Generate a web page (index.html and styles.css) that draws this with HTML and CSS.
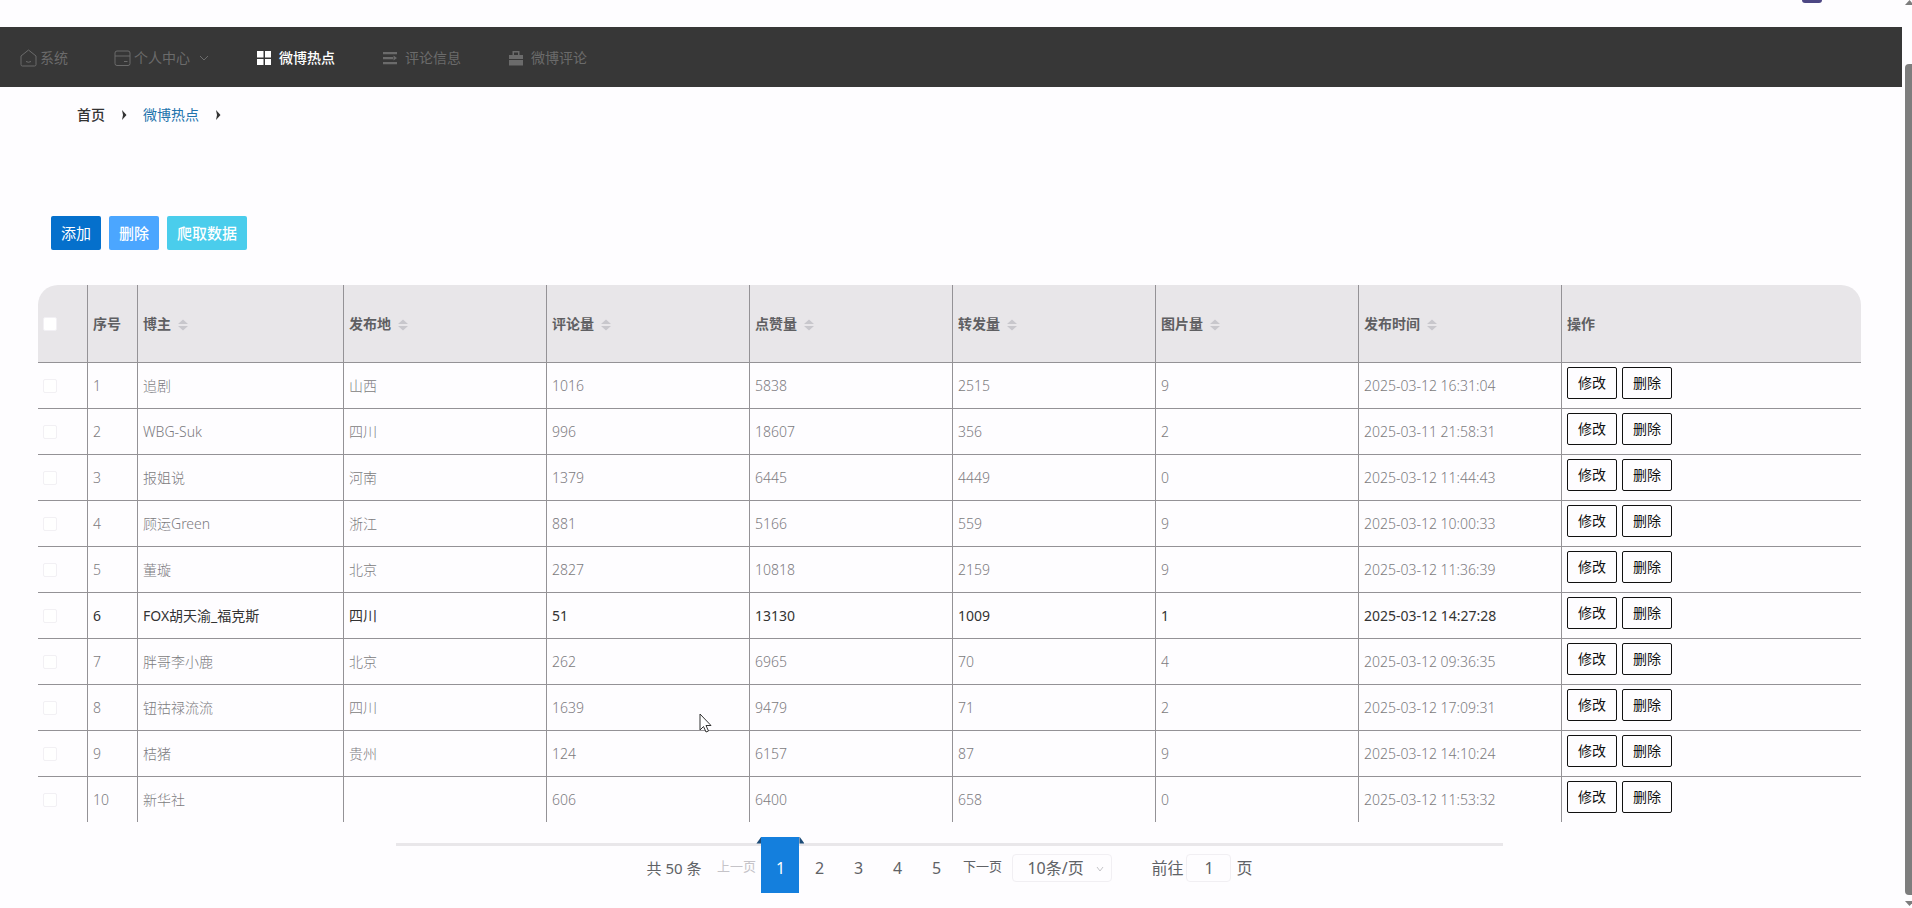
FILE: index.html
```html
<!DOCTYPE html>
<html lang="zh-CN">
<head>
<meta charset="utf-8">
<title>微博热点</title>
<link rel="stylesheet" href="styles.css">
</head>
<body>
<svg class="sprite" aria-hidden="true">
  <symbol id="sort" viewBox="0 0 10 12"><path d="M5 0.5 10 5H0zM0 7h10L5 11.5z" fill="currentColor"/></symbol>
</svg>
<div class="page">
  <header class="topbar"><span class="avatar"></span></header>
  <nav class="nav">
    <a class="nav-item" href="#"><svg class="icon-line" viewBox="0 0 17 18"><path d="M8.500 1 1 7v8.500q0 1.500 1.500 1.500h12q1.500 0 1.500-1.500V7zM6 12.500q2.500 1.500 5 0"/></svg>系统</a>
    <a class="nav-item" href="#"><svg class="icon-line" viewBox="0 0 17 18"><rect x="1" y="2" width="15" height="14.500" rx="2"/><path d="M1 7h15M10 12.500h3.500"/></svg>个人中心<svg class="icon-chevron" viewBox="0 0 10 6"><path d="M1 1l4 4 4-4"/></svg></a>
    <a class="nav-item active" href="#"><svg class="icon-fill" viewBox="0 0 18 18"><path d="M2 2h6.500v6.500H2zM10 2h6v6.500h-6zM2 10h6.500v6H2zM10 10h6v6h-6z"/></svg>微博热点</a>
    <a class="nav-item" href="#"><svg class="icon-fill" viewBox="0 0 18 18"><path d="M2 3h14v2.200H2zM2 8h10v2.200H2zM2 13h14v2.200H2zM12.500 6.500 16 9l-3.500 2.500z"/></svg>评论信息</a>
    <a class="nav-item" href="#"><svg class="icon-fill" viewBox="0 0 18 18"><path d="M5.500 6V2h7v4H16v4H2V6zM7 3.500V6h4V3.500zM2 11h14v5.500H2z" fill-rule="evenodd"/></svg>微博评论</a>
  </nav>
  <main class="content">
    <div class="crumbs">
      <a class="crumb" href="#">首页</a>
      <svg class="crumb-arrow" viewBox="0 0 6 10"><path d="M1 0 5.500 5 1 10 2 5z"/></svg>
      <a class="crumb current" href="#">微博热点</a>
      <svg class="crumb-arrow" viewBox="0 0 6 10"><path d="M1 0 5.500 5 1 10 2 5z"/></svg>
    </div>
    <div class="tools">
      <button class="tool add">添加</button>
      <button class="tool del">删除</button>
      <button class="tool crawl">爬取数据</button>
    </div>
    <table class="grid">
      <colgroup><col class="c-small"><col class="c-small"><col class="c-name"><col><col><col><col><col><col><col class="c-ops"></colgroup>
      <thead>
        <tr>
          <th><input type="checkbox" class="check" aria-label="全选"></th>
          <th>序号</th>
          <th>博主<button class="sort" aria-label="排序"><svg><use href="#sort"/></svg></button></th>
          <th>发布地<button class="sort" aria-label="排序"><svg><use href="#sort"/></svg></button></th>
          <th>评论量<button class="sort" aria-label="排序"><svg><use href="#sort"/></svg></button></th>
          <th>点赞量<button class="sort" aria-label="排序"><svg><use href="#sort"/></svg></button></th>
          <th>转发量<button class="sort" aria-label="排序"><svg><use href="#sort"/></svg></button></th>
          <th>图片量<button class="sort" aria-label="排序"><svg><use href="#sort"/></svg></button></th>
          <th>发布时间<button class="sort" aria-label="排序"><svg><use href="#sort"/></svg></button></th>
          <th>操作</th>
        </tr>
      </thead>
      <tbody>
        <tr><td><input type="checkbox" class="check" aria-label="选择第1行"></td><td>1</td><td>追剧</td><td>山西</td><td>1016</td><td>5838</td><td>2515</td><td>9</td><td>2025-03-12 16:31:04</td><td class="ops"><div class="ops-row"><button class="op">修改</button><button class="op">删除</button></div></td></tr>
        <tr><td><input type="checkbox" class="check" aria-label="选择第2行"></td><td>2</td><td>WBG-Suk</td><td>四川</td><td>996</td><td>18607</td><td>356</td><td>2</td><td>2025-03-11 21:58:31</td><td class="ops"><div class="ops-row"><button class="op">修改</button><button class="op">删除</button></div></td></tr>
        <tr><td><input type="checkbox" class="check" aria-label="选择第3行"></td><td>3</td><td>报姐说</td><td>河南</td><td>1379</td><td>6445</td><td>4449</td><td>0</td><td>2025-03-12 11:44:43</td><td class="ops"><div class="ops-row"><button class="op">修改</button><button class="op">删除</button></div></td></tr>
        <tr><td><input type="checkbox" class="check" aria-label="选择第4行"></td><td>4</td><td>顾运Green</td><td>浙江</td><td>881</td><td>5166</td><td>559</td><td>9</td><td>2025-03-12 10:00:33</td><td class="ops"><div class="ops-row"><button class="op">修改</button><button class="op">删除</button></div></td></tr>
        <tr><td><input type="checkbox" class="check" aria-label="选择第5行"></td><td>5</td><td>董璇</td><td>北京</td><td>2827</td><td>10818</td><td>2159</td><td>9</td><td>2025-03-12 11:36:39</td><td class="ops"><div class="ops-row"><button class="op">修改</button><button class="op">删除</button></div></td></tr>
        <tr class="hovered"><td><input type="checkbox" class="check" aria-label="选择第6行"></td><td>6</td><td>FOX胡天渝_福克斯</td><td>四川</td><td>51</td><td>13130</td><td>1009</td><td>1</td><td>2025-03-12 14:27:28</td><td class="ops"><div class="ops-row"><button class="op">修改</button><button class="op">删除</button></div></td></tr>
        <tr><td><input type="checkbox" class="check" aria-label="选择第7行"></td><td>7</td><td>胖哥李小鹿</td><td>北京</td><td>262</td><td>6965</td><td>70</td><td>4</td><td>2025-03-12 09:36:35</td><td class="ops"><div class="ops-row"><button class="op">修改</button><button class="op">删除</button></div></td></tr>
        <tr><td><input type="checkbox" class="check" aria-label="选择第8行"></td><td>8</td><td>钮祜禄流流</td><td>四川</td><td>1639</td><td>9479</td><td>71</td><td>2</td><td>2025-03-12 17:09:31</td><td class="ops"><div class="ops-row"><button class="op">修改</button><button class="op">删除</button></div></td></tr>
        <tr><td><input type="checkbox" class="check" aria-label="选择第9行"></td><td>9</td><td>桔猪</td><td>贵州</td><td>124</td><td>6157</td><td>87</td><td>9</td><td>2025-03-12 14:10:24</td><td class="ops"><div class="ops-row"><button class="op">修改</button><button class="op">删除</button></div></td></tr>
        <tr><td><input type="checkbox" class="check" aria-label="选择第10行"></td><td>10</td><td>新华社</td><td></td><td>606</td><td>6400</td><td>658</td><td>0</td><td>2025-03-12 11:53:32</td><td class="ops"><div class="ops-row"><button class="op">修改</button><button class="op">删除</button></div></td></tr>
      </tbody>
    </table>
    <div class="pager">
      <span class="total">共 50 条</span>
      <button class="step" disabled>上一页</button>
      <button class="num current">1</button>
      <button class="num">2</button>
      <button class="num">3</button>
      <button class="num">4</button>
      <button class="num">5</button>
      <button class="step next">下一页</button>
      <span class="size-box">
        <select class="size" aria-label="每页条数"><option>10条/页</option><option>20条/页</option></select>
        <svg class="size-arrow" viewBox="0 0 8 6"><path d="M1 1l3 4 3-4"/></svg>
      </span>
      <label class="jump">前往<input class="jump-input" type="text" value="1">页</label>
    </div>
  </main>
</div>
<div class="scrollbar" aria-hidden="true">
  <svg class="scroll-arrow" viewBox="0 0 9 5"><path d="M4.500 0 9 5H0z"/></svg>
  <span class="thumb"></span>
  <svg class="scroll-arrow" viewBox="0 0 9 5"><path d="M0 0h9L4.500 5z"/></svg>
</div>
<svg class="pointer" viewBox="0 0 13 20" aria-hidden="true"><path d="M1 1v16l3.500-3.500L7 19l2.500-1-2.500-5.500h5z"/></svg>
</body>
</html>
```
FILE: styles.css
```css
* { box-sizing: border-box; }

body {
  margin: 0;
  min-height: 100vh;
  display: grid;
  grid-template-columns: minmax(0, 1fr) 10px;
  background: #fefdff;
  font: 14px/24px "Noto Sans", "Noto Sans CJK SC", sans-serif;
  color: #606266;
  overflow: hidden;
}

a { text-decoration: none; color: inherit; }
button, input, select { font: inherit; color: inherit; margin: 0; padding: 0; }
button { border: 0; background: none; }
.sprite { position: absolute; width: 0; height: 0; }

.topbar {
  height: 27px;
  padding: 0 80px;
  display: flex;
  justify-content: flex-end;
  align-items: flex-start;
}
.avatar {
  width: 20px;
  height: 3px;
  border-radius: 0 0 10px 10px;
  background: #4d4784;
}

.nav {
  height: 60px;
  padding: 2px 20px 0;
  display: flex;
  align-items: center;
  gap: 46px;
  background: #373737;
  color: #6b6b6b;
}
.nav-item { display: flex; align-items: center; }
.nav-item.active { color: #fff; font-weight: 500; }
.icon-line { width: 17px; height: 18px; margin-right: 3px; fill: none; stroke: currentColor; }
.icon-fill { width: 18px; height: 18px; margin-right: 6px; fill: currentColor; }
.icon-chevron { width: 10px; height: 6px; margin-left: 9px; fill: none; stroke: currentColor; }

.content { padding: 0 41px 0 38px; }

.crumbs {
  height: 56px;
  padding: 0 39px;
  display: flex;
  align-items: center;
  gap: 16px;
  color: #333;
}
.crumb { font-weight: 500; }
.crumb.current { color: #2173ac; font-weight: 400; }
.crumb-arrow { width: 6px; height: 10px; fill: #333; }

.tools {
  display: flex;
  gap: 8px;
  padding: 73px 13px 35px;
}
.tool {
  height: 34px;
  padding: 0 10px;
  border-radius: 2px;
  color: #fff;
  font-size: 15px;
}
.add { background: #0570cc; }
.del { background: #4ba6ff; font-weight: 500; }
.crawl { background: #4acdec; font-weight: 500; }

.grid {
  width: 100%;
  table-layout: fixed;
  border-collapse: separate;
  border-spacing: 0;
}
.c-small { width: 50px; }
.c-name { width: 11.3%; }
.c-ops { width: 16.4%; }
.grid th, .grid td {
  padding: 0 5px;
  border: solid #949296;
  border-width: 0 1px 1px 0;
  text-align: left;
  white-space: nowrap;
}
.grid th { height: 78px; background: #e8e6e9; color: #5f5f62; font-weight: 700; }
.grid td { height: 46px; color: #7c7b80; font-weight: 300; }
.grid tr > :last-child { border-right: 0; }
.grid th:first-child { border-top-left-radius: 20px; }
.grid th:last-child { border-top-right-radius: 20px; }
.grid tbody tr:last-child td { height: 45px; border-bottom: 0; }
.grid .hovered td { color: #333; font-weight: 400; }

.check {
  appearance: none;
  display: block;
  width: 14px;
  height: 14px;
  border: 1px solid #f2f0f4;
  border-radius: 2px;
  background: #fff;
}
.sort { margin-left: 7px; color: #c8c7cc; vertical-align: middle; line-height: 0; }
.sort svg { width: 10px; height: 12px; display: block; }

.grid td.ops { padding-top: 4px; vertical-align: top; }
.ops-row { display: flex; gap: 5px; }
.op {
  width: 50px;
  height: 32px;
  border: 1px solid #111;
  border-radius: 2px;
  color: #111;
  font-weight: 400;
}

.pager {
  width: 60.7%;
  margin: 21px auto 0;
  height: 46px;
  border-top: 3px solid #e9e7ea;
  display: flex;
  justify-content: center;
  align-items: center;
  font-size: 16px;
  white-space: nowrap;
}
.total { font-size: 15px; margin-right: 15px; }
.step { width: 40px; height: 28px; padding-bottom: 4px; font-size: 13px; }
.step:disabled { color: #c5c3c8; }
.step.next { margin-left: 6px; }
.num { width: 38px; height: 56px; margin-right: 1px; }
.num.current {
  position: relative;
  margin: 0 1px 6px 5px;
  padding-top: 6px;
  background: #147fdd;
  color: #fff;
}
.num.current::before, .num.current::after {
  content: "";
  position: absolute;
  top: 0;
  width: 5px;
  height: 7px;
  background: #1c4c78;
}
.num.current::before { right: 100%; clip-path: polygon(100% 0, 100% 100%, 0 100%); }
.num.current::after { left: 100%; clip-path: polygon(0 0, 100% 100%, 0 100%); }
.size-box { position: relative; display: flex; margin: 0 39px 0 10px; }
.size {
  appearance: none;
  width: 100px;
  height: 28px;
  padding: 0 14px;
  border: 1px solid #f1eff3;
  border-radius: 4px;
  background: transparent;
}
.size-arrow { position: absolute; right: 8px; top: 12px; width: 8px; height: 6px; fill: none; stroke: #c4c4c8; }
.jump { display: flex; align-items: center; }
.jump-input {
  width: 45px;
  height: 28px;
  margin: 0 5px 0 3px;
  border: 1px solid #f1eff3;
  border-radius: 4px;
  background: transparent;
  text-align: center;
}

.scrollbar {
  height: 100vh;
  display: flex;
  flex-direction: column;
  padding: 0 0 2px 3px;
  overflow: hidden;
}
.scroll-arrow { flex: none; width: 9px; height: 5px; fill: #7d7d7d; }
.thumb { flex: 1; margin: 59px 0 6px; border-radius: 4px 0 0 4px; background: #7d7d7d; }

.pointer { position: absolute; left: 699px; top: 713px; width: 13px; height: 20px; fill: #fff; stroke: #333; }
```
